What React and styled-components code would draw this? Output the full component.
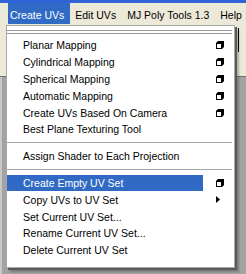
import styled, { createGlobalStyle } from "styled-components";

const GlobalStyle = createGlobalStyle`
  html, body {
    margin: 0;
    padding: 0;
    background: #a3a3a3;
  }
  body {
    font-family: "Liberation Sans", Arial, sans-serif;
    font-size: 10.5px;
    color: #000;
  }
`;

const menu = [
  { label: "Planar Mapping", box: true },
  { label: "Cylindrical Mapping", box: true },
  { label: "Spherical Mapping", box: true },
  { label: "Automatic Mapping", box: true },
  { label: "Create UVs Based On Camera", box: true },
  { label: "Best Plane Texturing Tool" },
  { sep: true },
  { label: "Assign Shader to Each Projection" },
  { sep: true },
  { label: "Create Empty UV Set", box: true, active: true },
  { label: "Copy UVs to UV Set", arrow: true },
  { label: "Set Current UV Set..." },
  { label: "Rename Current UV Set..." },
  { label: "Delete Current UV Set" },
];

function OptionBox() {
  return (
    <svg width="8" height="8" viewBox="0 0 8 8">
      <path d="M0 2 L2 0 H8 V6 L6 8 H0 Z" fill="#000" />
      <rect x="1" y="3" width="4" height="4" fill="#fff" />
    </svg>
  );
}

function SubArrow() {
  return (
    <svg width="4" height="7" viewBox="0 0 4 7">
      <path d="M0 0 L4 3.5 L0 7 Z" fill="#000" />
    </svg>
  );
}

export default function App() {
  return (
    <Screen>
      <GlobalStyle />
      <TitleEdge />
      <MenuBar>
        <MenuTitle $open>Create UVs</MenuTitle>
        <MenuTitle>Edit UVs</MenuTitle>
        <MenuTitle>MJ Poly Tools 1.3</MenuTitle>
        <MenuTitle>Help</MenuTitle>
      </MenuBar>
      <Workspace>
        <Shelf>
          <ShelfMark />
        </Shelf>
        <ViewPanel />
        <Dropdown>
          <TearOff />
          {menu.map((item, i) =>
            item.sep ? (
              <Separator key={i} />
            ) : (
              <Item key={i}>
                <Label $active={item.active}>{item.label}</Label>
                <Trailing>
                  {item.box && <OptionBox />}
                  {item.arrow && <SubArrow />}
                </Trailing>
              </Item>
            )
          )}
        </Dropdown>
      </Workspace>
    </Screen>
  );
}

const Screen = styled.div`
  width: 246px;
  height: 274px;
  overflow: hidden;
  display: flex;
  flex-direction: column;
  background: #a3a3a3;
`;

const TitleEdge = styled.div`
  height: 3px;
  background: #2f63d6;
`;

const MenuBar = styled.div`
  height: 21px;
  background: #ece9d8;
  display: flex;
  align-items: stretch;
  padding-left: 8px;
  white-space: nowrap;
`;

const MenuTitle = styled.div`
  display: flex;
  align-items: center;
  padding: 2px 6px 0 2px;
  margin-right: 3px;
  color: ${(p) => (p.$open ? "#fff" : "#000")};
  background: ${(p) => (p.$open ? "#316ac5" : "transparent")};
`;

const Workspace = styled.div`
  position: relative;
  flex: 1;
  display: flex;
  flex-direction: column;
`;

const Shelf = styled.div`
  height: 52px;
  background: #ece9d8;
  border-bottom: 1px solid #6e6e6e;
  position: relative;
`;

const ShelfMark = styled.div`
  position: absolute;
  right: 7px;
  top: 4px;
  width: 1px;
  height: 24px;
  background: #000;
`;

const ViewPanel = styled.div`
  flex: 1;
  background: #a3a3a3;
  border-left: 2px solid #c8c8c8;
`;

const Dropdown = styled.div`
  position: absolute;
  left: 6px;
  top: 1px;
  width: 227px;
  background: #fff;
  border: 1px solid #a8a8a8;
  box-shadow: 2px 2px 0 #5a5a5a, 4px 4px 2px rgba(0, 0, 0, 0.25);
  padding: 4px 0 8px;
`;

const TearOff = styled.div`
  margin: 0 2px 3px 0;
  height: 2px;
  border-top: 1px solid #9a9a9a;
  border-bottom: 1px solid #9a9a9a;
`;

const Item = styled.div`
  height: 16.8px;
  display: grid;
  grid-template-columns: 1fr 31px;
  align-items: stretch;
`;

const Label = styled.div`
  display: flex;
  align-items: center;
  padding-left: 16px;
  white-space: nowrap;
  background: ${(p) => (p.$active ? "#316ac5" : "transparent")};
  color: ${(p) => (p.$active ? "#fff" : "#000")};
`;

const Trailing = styled.div`
  display: flex;
  align-items: center;
  padding-left: 13px;
`;

const Separator = styled.div`
  height: 10px;
  display: flex;
  align-items: center;

  &::before {
    content: "";
    flex: 1;
    margin-right: 2px;
    border-top: 1px solid #a8a8a8;
  }
`;
